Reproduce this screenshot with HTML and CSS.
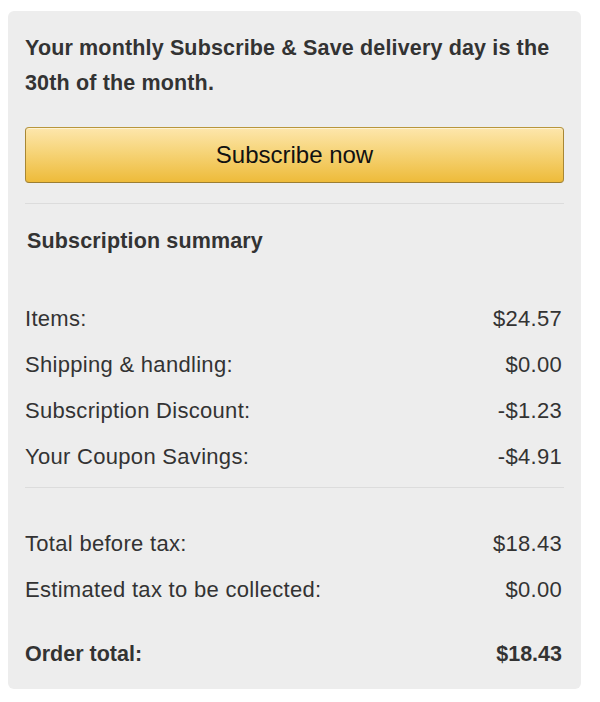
FILE: index.html
```html
<!DOCTYPE html>
<html lang="en">
<head>
<meta charset="utf-8">
<title>Subscription summary</title>
<link rel="stylesheet" href="styles.css">
</head>
<body>
<div class="panel">
  <p class="headline">Your monthly Subscribe &amp; Save delivery day is the 30th of the month.</p>
  <button class="btn" type="button">Subscribe now</button>
  <hr class="rule rule-top">
  <h2 class="summary-title">Subscription summary</h2>
  <div class="rows">
    <div class="row"><span>Items:</span><span>$24.57</span></div>
    <div class="row"><span>Shipping &amp; handling:</span><span>$0.00</span></div>
    <div class="row"><span>Subscription Discount:</span><span>-$1.23</span></div>
    <div class="row"><span>Your Coupon Savings:</span><span>-$4.91</span></div>
  </div>
  <hr class="rule rule-mid">
  <div class="rows totals">
    <div class="row"><span>Total before tax:</span><span>$18.43</span></div>
    <div class="row"><span>Estimated tax to be collected:</span><span>$0.00</span></div>
  </div>
  <div class="row grand"><span>Order total:</span><span>$18.43</span></div>
</div>
</body>
</html>
```
FILE: styles.css
```css
* { box-sizing: border-box; }
html, body { margin: 0; padding: 0; background: #fff; }
body {
  font-family: "Liberation Sans", Arial, sans-serif;
  color: #333;
}
.panel {
  margin: 11px 0 0 8px;
  width: 573px;
  height: 678px;
  background: #ededed;
  border-radius: 6px;
  padding: 19.5px 17px 0 17px;
}
.headline {
  margin: 0;
  font-size: 21.5px;
  font-weight: bold;
  line-height: 35px;
  letter-spacing: 0.15px;
  color: #333;
}
.btn {
  display: block;
  width: 100%;
  height: 56px;
  margin: 26.5px 0 0 0;
  padding: 0;
  border: 1px solid;
  border-color: #b8963c #a88734 #9c7e31;
  border-radius: 4px;
  background: linear-gradient(to bottom, #fde6ac 0%, #f6d478 45%, #eebb3a 100%);
  font-family: "Liberation Sans", Arial, sans-serif;
  font-size: 24px;
  color: #111;
  text-align: center;
  box-shadow: inset 0 1px 0 rgba(255,255,255,0.5);
}
.rule {
  border: 0;
  height: 1px;
  background: #dcdcdc;
  margin: 0;
}
.rule-top { margin-top: 20px; }
.summary-title {
  margin: 20px 0 0 2px;
  font-size: 21.5px;
  font-weight: bold;
  line-height: 35px;
  letter-spacing: 0.15px;
}
.rows { margin-top: 36.5px; }
.row {
  display: flex;
  justify-content: space-between;
  font-size: 22px;
  line-height: 46px;
  letter-spacing: 0.3px;
  padding-right: 2px;
}
.rule-mid { margin-top: 7.5px; }
.totals { margin-top: 33px; }
.grand {
  margin-top: 18px;
  font-size: 21.5px;
  font-weight: bold;
  letter-spacing: 0;
}
```
